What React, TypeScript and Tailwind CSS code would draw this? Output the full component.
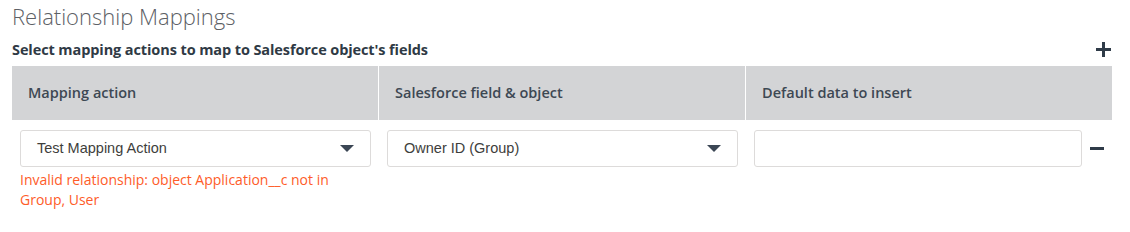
import React from 'react';

const sans = "font-['Open_Sans','Noto_Sans',sans-serif]";
const arial = "font-['Liberation_Sans',Arial,sans-serif]";

const Caret = () => (
  <svg width="14" height="8" viewBox="0 0 14 8" className="shrink-0">
    <path d="M0 0 L14 0 L7 7 Z" fill="#3b4654" />
  </svg>
);

const SelectBox = ({ value }: { value: string }) => (
  <div className="h-[37px] w-full flex items-center justify-between border border-[#dddbda] rounded-[3px] bg-white pl-4 pr-4">
    <span className={`${arial} text-[14.5px] text-[#3e3e3c]`}>{value}</span>
    <Caret />
  </div>
);

const headers = ['Mapping action', 'Salesforce field & object', 'Default data to insert'];

export default function App() {
  return (
    <div className={`${sans} w-[1130px] h-[232px] bg-white pl-3 pr-[18px]`}>
      <h2 className="text-[22px] font-light text-[#5d6166] leading-[32px]">Relationship Mappings</h2>
      <div className="flex items-center justify-between mt-[8px] h-[20px]">
        <p className="text-[14.5px] font-bold text-[#2f3a45] leading-[20px] tracking-[-0.1px]">
          Select mapping actions to map to Salesforce object's fields
        </p>
        <svg width="15" height="15" viewBox="0 0 15 15" className="mb-[2px] mr-[1px]">
          <path d="M6 0h3v6h6v3H9v6H6V9H0V6h6z" fill="#2f3b48" />
        </svg>
      </div>
      <div className="grid grid-cols-3 gap-[1px] bg-white h-[54px] mt-[6px]">
        {headers.map((h) => (
          <div key={h} className="bg-[#d3d4d6] flex items-center pl-4">
            <span className="text-[14.5px] font-semibold text-[#3d4853]">{h}</span>
          </div>
        ))}
      </div>
      <div className="grid grid-cols-3 gap-[1px] pt-[10px]">
        <div className="pl-2 pr-[7px]">
          <SelectBox value="Test Mapping Action" />
          <p className="text-[14px] leading-[20px] text-[#fe5c29] mt-[3px]">
            Invalid relationship: object Application__c not in
            <br />
            Group, User
          </p>
        </div>
        <div className="pl-2 pr-[7px]">
          <SelectBox value="Owner ID (Group)" />
        </div>
        <div className="pl-2 flex items-start">
          <div className="h-[37px] flex-1 border border-[#dddbda] rounded-[3px] bg-white" />
          <div className="w-[30px] h-[37px] flex items-center justify-end">
            <div className="w-[14px] h-[3px] bg-[#2f3b48] mr-[8px]" />
          </div>
        </div>
      </div>
    </div>
  );
}
